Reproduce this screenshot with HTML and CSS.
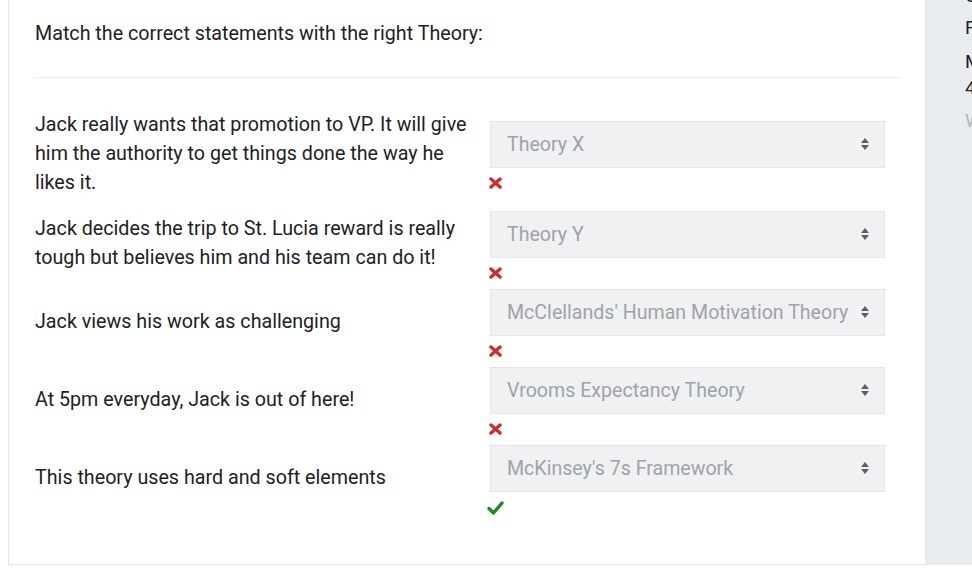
FILE: index.html
```html
<!DOCTYPE html>
<html>
<head>
<meta charset="utf-8">
<link rel="stylesheet" href="styles.css">
</head>
<body>
<div class="page">
  <div class="card">
    <div class="qtext">Match the correct statements with the right Theory:</div>
    <div class="sep"></div>
    <div class="answers">
      <div class="row">
        <div class="stem">Jack really wants that promotion to VP. It will give him the authority to get things done the way he likes it.</div>
        <div class="control">
          <div class="select"><span>Theory X</span><span class="arrows"></span></div>
          <div class="fb"><svg class="x" width="13" height="12" viewBox="0 0 13 12"><path d="M2 2 L11 10 M11 2 L2 10" stroke="#c9302c" stroke-width="3.4" stroke-linecap="round"/></svg></div>
        </div>
      </div>
      <div class="row">
        <div class="stem">Jack decides the trip to St. Lucia reward is really tough but believes him and his team can do it!</div>
        <div class="control">
          <div class="select"><span>Theory Y</span><span class="arrows"></span></div>
          <div class="fb"><svg class="x" width="13" height="12" viewBox="0 0 13 12"><path d="M2 2 L11 10 M11 2 L2 10" stroke="#c9302c" stroke-width="3.4" stroke-linecap="round"/></svg></div>
        </div>
      </div>
      <div class="row">
        <div class="stem">Jack views his work as challenging</div>
        <div class="control">
          <div class="select"><span>McClellands' Human Motivation Theory</span><span class="arrows"></span></div>
          <div class="fb"><svg class="x" width="13" height="12" viewBox="0 0 13 12"><path d="M2 2 L11 10 M11 2 L2 10" stroke="#c9302c" stroke-width="3.4" stroke-linecap="round"/></svg></div>
        </div>
      </div>
      <div class="row">
        <div class="stem">At 5pm everyday, Jack is out of here!</div>
        <div class="control">
          <div class="select"><span>Vrooms Expectancy Theory</span><span class="arrows"></span></div>
          <div class="fb"><svg class="x" width="13" height="12" viewBox="0 0 13 12"><path d="M2 2 L11 10 M11 2 L2 10" stroke="#c9302c" stroke-width="3.4" stroke-linecap="round"/></svg></div>
        </div>
      </div>
      <div class="row">
        <div class="stem">This theory uses hard and soft elements</div>
        <div class="control">
          <div class="select"><span>McKinsey's 7s Framework</span><span class="arrows"></span></div>
          <div class="fb"><svg class="ok" width="17" height="14" viewBox="0 0 17 14"><path d="M2 7.5 L6.5 12 L15 2" fill="none" stroke="#1e8c24" stroke-width="3.4" stroke-linecap="round" stroke-linejoin="round"/></svg></div>
        </div>
      </div>
    </div>
  </div>
  <div class="side">
    <div class="s1">C</div>
    <div class="s2">F</div>
    <div class="s3">M<br>4</div>
    <div class="s4">W</div>
  </div>
</div>
</body>
</html>
```

FILE: styles.css
```css
html, body {
  margin: 0;
  padding: 0;
  background: #fff;
}
body {
  font-family: Roboto, "Liberation Sans", sans-serif;
  color: #1d2125;
  width: 972px;
  height: 579px;
  overflow: hidden;
}
.page {
  display: flex;
  height: 565px;
  padding-left: 8px;
}
.card {
  width: 917px;
  border-left: 1px solid #e4e4e4;
  border-bottom: 1px solid #e4e4e4;
  box-sizing: border-box;
  padding: 0 26px 0 26px;
  background: #fff;
}
.qtext {
  font-size: 19.7px;
  line-height: 28px;
  padding-top: 20px;
  height: 58px;
  box-sizing: border-box;
}
.sep {
  margin-top: 19px;
  height: 1px;
  background: #ececec;
  width: 865px;
}
.answers {
  padding-top: 29px;
}
.row {
  display: flex;
  align-items: center;
}
.stem {
  width: 445px;
  padding: 2.5px 0 12.5px;
  font-size: 19.7px;
  line-height: 29px;
  margin-right: 10px;
}
.control {
  padding: 1.5px 0;
}
.select {
  width: 395px;
  height: 47px;
  box-sizing: border-box;
  background: #eff1f3;
  border: 1px solid #e3e6e9;
  display: flex;
  align-items: center;
  justify-content: space-between;
  padding: 0 15px 0 16px;
  font-size: 19.6px;
  color: #9ea3a8;
  white-space: nowrap;
}
.arrows {
  width: 8px;
  height: 12px;
  position: relative;
  flex: none;
}
.arrows::before, .arrows::after {
  content: "";
  position: absolute;
  left: 0;
  border-left: 4px solid transparent;
  border-right: 4px solid transparent;
}
.arrows::before {
  top: 0;
  border-bottom: 5px solid #5c6165;
}
.arrows::after {
  bottom: 0;
  border-top: 5px solid #5c6165;
}
.fb {
  height: 28px;
  display: flex;
  align-items: center;
  padding-top: 2px;
  box-sizing: border-box;
}
.x {
  display: block;
  margin-left: -1px;
}
.ok {
  display: block;
  margin-left: -3px;
  margin-top: 2px;
}
.side {
  flex: 1;
  background: #e9ecef;
  padding-left: 40px;
  font-size: 19px;
  color: #1d2125;
  overflow: hidden;
  white-space: nowrap;
}
.s1 { margin-top: -16px; line-height: 24px; }
.s2 { margin-top: 8px; line-height: 24px; }
.s3 { margin-top: 9px; line-height: 26px; }
.s4 { margin-top: 8px; line-height: 24px; color: #b0b4b8; }
```
